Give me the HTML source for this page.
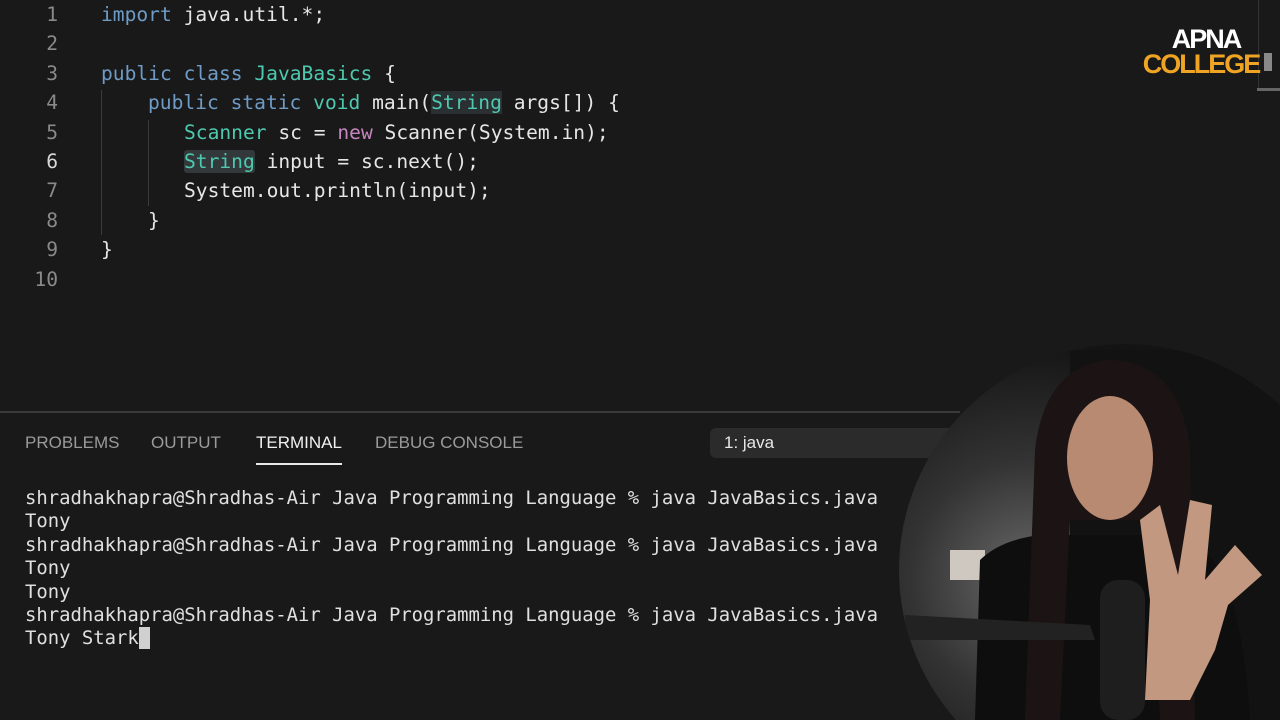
<!DOCTYPE html>
<html><head><meta charset="utf-8"><style>
html,body{margin:0;padding:0;width:1280px;height:720px;overflow:hidden;background:#191919;}
.code{position:absolute;left:0;top:0;font-family:"DejaVu Sans Mono","Liberation Mono",monospace;font-size:19.6px;}
.ln{position:absolute;width:58px;text-align:right;color:#8a8a8a;}
.l{position:absolute;left:101px;white-space:pre;color:#d4d4d4;}
.k{color:#6e9cc6}.t{color:#4ec9b0}.p{color:#c586c0}.w{color:#e6e6e6}.f{color:#dcdcaa}
.tabs{position:absolute;top:433px;font-family:"Liberation Sans",sans-serif;font-size:17px;color:#9a9a9a;}
.term{position:absolute;left:25px;top:487px;font-family:"DejaVu Sans Mono","Liberation Mono",monospace;font-size:18.9px;line-height:23.4px;color:#e0e0e0;white-space:pre;}
</style></head><body>
<div class="code">
<div class="ln" style="top:3px">1</div><div class="ln" style="top:32px">2</div><div class="ln" style="top:62px">3</div><div class="ln" style="top:91px">4</div><div class="ln" style="top:121px">5</div><div class="ln" style="top:150px;color:#d8d8d8">6</div><div class="ln" style="top:179px">7</div><div class="ln" style="top:209px">8</div><div class="ln" style="top:238px">9</div><div class="ln" style="top:268px">10</div>
<div class="l" style="top:3px"><span class="k">import</span> <span class="w">java.util.*;</span></div>
<div class="l" style="top:62px"><span class="k">public</span> <span class="k">class</span> <span class="t">JavaBasics</span> <span class="w">{</span></div>
<div class="l" style="top:91px;left:148px"><span class="k">public</span> <span class="k">static</span> <span class="t">void</span> <span class="w">main(</span><span class="t" style="background:#2a2f31">String</span> <span class="w">args[]) {</span></div>
<div class="l" style="top:121px;left:184px"><span class="t">Scanner</span> <span class="w">sc = </span><span class="p">new</span> <span class="w">Scanner(System.in);</span></div>
<div class="l" style="top:150px;left:184px"><span class="t" style="background:#33383a;border-radius:3px">String</span> <span class="w">input = sc.next();</span></div>
<div class="l" style="top:179px;left:184px"><span class="w">System.out.println(input);</span></div>
<div class="l" style="top:209px;left:148px"><span class="w">}</span></div>
<div class="l" style="top:238px"><span class="w">}</span></div>
<div style="position:absolute;left:101px;top:90px;width:1px;height:145px;background:#3a3a3a"></div>
<div style="position:absolute;left:148px;top:120px;width:1px;height:86px;background:#3a3a3a"></div>
</div>
<div style="position:absolute;left:0;top:411px;width:960px;height:2px;background:#3a3a3a"></div>
<div class="tabs" style="left:25px">PROBLEMS</div>
<div class="tabs" style="left:151px">OUTPUT</div>
<div class="tabs" style="left:256px;color:#f0f0f0">TERMINAL</div>
<div class="tabs" style="left:375px">DEBUG CONSOLE</div>
<div style="position:absolute;left:256px;top:463px;width:86px;height:2px;background:#e8e8e8"></div>
<div style="position:absolute;left:710px;top:428px;width:250px;height:30px;background:#2b2b2b;border-radius:6px"></div>
<div class="tabs" style="left:724px;color:#e8e8e8">1: java</div>
<div class="term">shradhakhapra@Shradhas-Air Java Programming Language % java JavaBasics.java
Tony
shradhakhapra@Shradhas-Air Java Programming Language % java JavaBasics.java
Tony
Tony
shradhakhapra@Shradhas-Air Java Programming Language % java JavaBasics.java
Tony Stark<span style="background:#d0d0d0;color:#d0d0d0"> </span></div>
<div style="position:absolute;left:1258px;top:0;width:1px;height:90px;background:#333"></div>
<div style="position:absolute;left:1257px;top:88px;width:23px;height:3px;background:#666"></div>
<div style="position:absolute;left:1264px;top:53px;width:8px;height:18px;background:#888"></div>
<div style="position:absolute;left:1146px;top:27px;width:120px;text-align:center;font-family:'Liberation Sans',sans-serif;font-weight:bold;line-height:25px;letter-spacing:-2px">
<div style="color:#fff;font-size:27px">APNA</div><div style="color:#f0a424;font-size:27px;margin-left:-10px">COLLEGE</div></div>
<svg style="position:absolute;left:0;top:0" width="1280" height="720">
<defs><clipPath id="c"><circle cx="1125" cy="570" r="226"/></clipPath>
<radialGradient id="g" cx="0.35" cy="0.6" r="0.6"><stop offset="0" stop-color="#6a6a6a"/><stop offset="0.5" stop-color="#333"/><stop offset="1" stop-color="#141414"/></radialGradient></defs>
<g clip-path="url(#c)">
<rect x="890" y="340" width="400" height="400" fill="url(#g)"/>
<rect x="1070" y="350" width="220" height="380" fill="#121212"/>
<rect x="950" y="550" width="35" height="30" fill="#cfc8c0"/>
<path d="M975 720 L980 560 Q1000 540 1040 535 L1180 535 Q1240 550 1250 720 Z" fill="#0e0e0e"/>
<path d="M1025 720 L1035 450 Q1045 365 1110 360 Q1180 362 1190 450 L1195 720 L1160 720 L1150 520 L1070 520 L1060 720 Z" fill="#1c1414"/>
<ellipse cx="1110" cy="458" rx="43" ry="62" fill="#b88a72"/>
<path d="M1145 700 L1150 600 L1140 520 L1160 505 L1178 575 L1190 500 L1212 505 L1205 580 L1235 545 L1262 575 L1228 605 L1215 650 L1190 700 Z" fill="#c29880"/>
<rect x="1100" y="580" width="45" height="140" rx="18" fill="#1e1e1e"/>
<path d="M905 615 L1090 625 L1095 640 L905 640 Z" fill="#222"/>
</g></svg>
</body></html>
